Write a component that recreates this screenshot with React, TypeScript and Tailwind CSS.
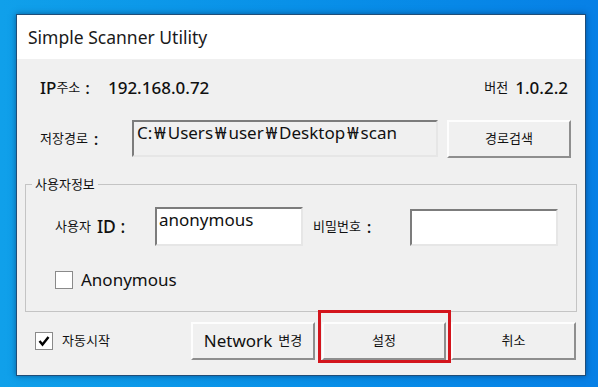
import React from 'react';

const font = { fontFamily: '"Noto Sans", "Noto Sans CJK KR", sans-serif' };

const Sunken: React.FC<{ className?: string; children?: React.ReactNode }> = ({ className = '', children }) => (
  <div
    className={`border-2 border-t-[#7c7c7c] border-l-[#7c7c7c] border-r-[#e6e6e6] border-b-[#e6e6e6] ${className}`}
  >
    {children}
  </div>
);

const Button: React.FC<{ className?: string; children: React.ReactNode }> = ({ className = '', children }) => (
  <button
    className={`h-[38px] bg-[#f0f0f0] border-2 border-t-[#fdfdfd] border-l-[#fdfdfd] border-r-[#8e8e8e] border-b-[#8e8e8e] flex items-center justify-center text-[#111] ${className}`}
  >
    {children}
  </button>
);

const CheckBox: React.FC<{ checked?: boolean }> = ({ checked }) => (
  <div className="w-[18px] h-[18px] bg-white border border-[#8a8a8a] flex items-center justify-center">
    {checked && (
      <svg width="12" height="12" viewBox="0 0 12 12">
        <path d="M1.5 6 L4.5 9.5 L10.5 2" fill="none" stroke="#000" strokeWidth="2.4" />
      </svg>
    )}
  </div>
);

const Won = () => <span className="mx-[2px]">₩</span>;

export default function App() {
  return (
    <div
      className="w-[598px] h-[387px] overflow-hidden bg-linear-to-r from-[#10a0ea] to-[#0780e6] pt-[14px] pl-[16px]"
      style={font}
    >
      <div className="w-[570px] h-[362px] flex flex-col border border-[#1f4d78] shadow-[0_0_6px_rgba(0,30,70,0.5)]">
        <div className="h-[44px] bg-white flex items-center pl-[11px] text-[17.5px] text-[#1a1a1a]">
          Simple Scanner Utility
        </div>

        <div className="flex-1 bg-[#f0f0f0] flex flex-col text-[#111]">
          {/* IP / version */}
          <div className="mt-[19px] h-[20px] flex items-center justify-between pl-[23px] pr-[17px]">
            <div className="flex items-center">
              <span className="text-[17px] font-medium">IP</span>
              <span className="text-[13px]">주소</span>
              <span className="text-[17px] font-medium ml-[5px]">:</span>
              <span className="text-[17px] font-medium ml-[18px]">192.168.0.72</span>
            </div>
            <div className="flex items-center">
              <span className="text-[13px]">버전</span>
              <span className="text-[17px] font-medium ml-[7px]">1.0.2.2</span>
            </div>
          </div>

          {/* path */}
          <div className="mt-[22px] h-[38px] flex pl-[23px]">
            <div className="w-[92px] flex items-center">
              <span className="text-[13px]">저장경로</span>
              <span className="text-[17px] font-medium ml-[6px]">:</span>
            </div>
            <Sunken className="w-[306px] h-[37px] bg-[#f0f0f0] pl-[3px] text-[17px] leading-[22px]">
              C:<Won />Users<Won />user<Won />Desktop<Won />scan
            </Sunken>
            <Button className="ml-[9px] w-[124px] text-[13px]">경로검색</Button>
          </div>

          {/* user info group */}
          <fieldset className="mt-[17px] ml-[8px] w-[552px] h-[137px] border border-[#c4c4c4]">
            <legend className="ml-[6px] px-[3px] text-[13px] leading-[18px]">사용자정보</legend>
            <div className="mt-[14px] h-[39px] flex items-center pl-[29px]">
              <div className="w-[100px] flex items-center">
                <span className="text-[13px]">사용자</span>
                <span className="text-[17.5px] font-medium ml-[6px]">ID :</span>
              </div>
              <Sunken className="w-[148px] h-[39px] bg-white pl-[2px] text-[17px] leading-[22px]">
                anonymous
              </Sunken>
              <div className="ml-[10px] w-[97px] flex items-center">
                <span className="text-[13px]">비밀번호</span>
                <span className="text-[17px] font-medium ml-[6px]">:</span>
              </div>
              <Sunken className="w-[148px] h-[37px] mt-[2px] bg-white" />
            </div>
            <div className="mt-[24px] h-[20px] flex items-center pl-[29px]">
              <CheckBox />
              <span className="ml-[8px] text-[17px]">Anonymous</span>
            </div>
          </fieldset>

          {/* bottom */}
          <div className="mt-[10px] h-[38px] flex items-center pl-[18px] pr-[9px]">
            <CheckBox checked />
            <span className="ml-[9px] text-[13px]">자동시작</span>
            <div className="ml-auto flex items-center">
              <Button className="w-[124px]">
                <span className="text-[17px]">Network</span>
                <span className="text-[13px] ml-[6px]">변경</span>
              </Button>
              <div className="relative ml-[7px]">
                <Button className="w-[124px] text-[13px]">설정</Button>
                <span className="absolute left-[-4px] right-[-5px] top-[-12px] bottom-[-3px] border-[3px] border-[#d3141c] pointer-events-none" />
              </div>
              <Button className="ml-[5px] w-[125px] text-[13px]">취소</Button>
            </div>
          </div>
        </div>
      </div>
    </div>
  );
}
